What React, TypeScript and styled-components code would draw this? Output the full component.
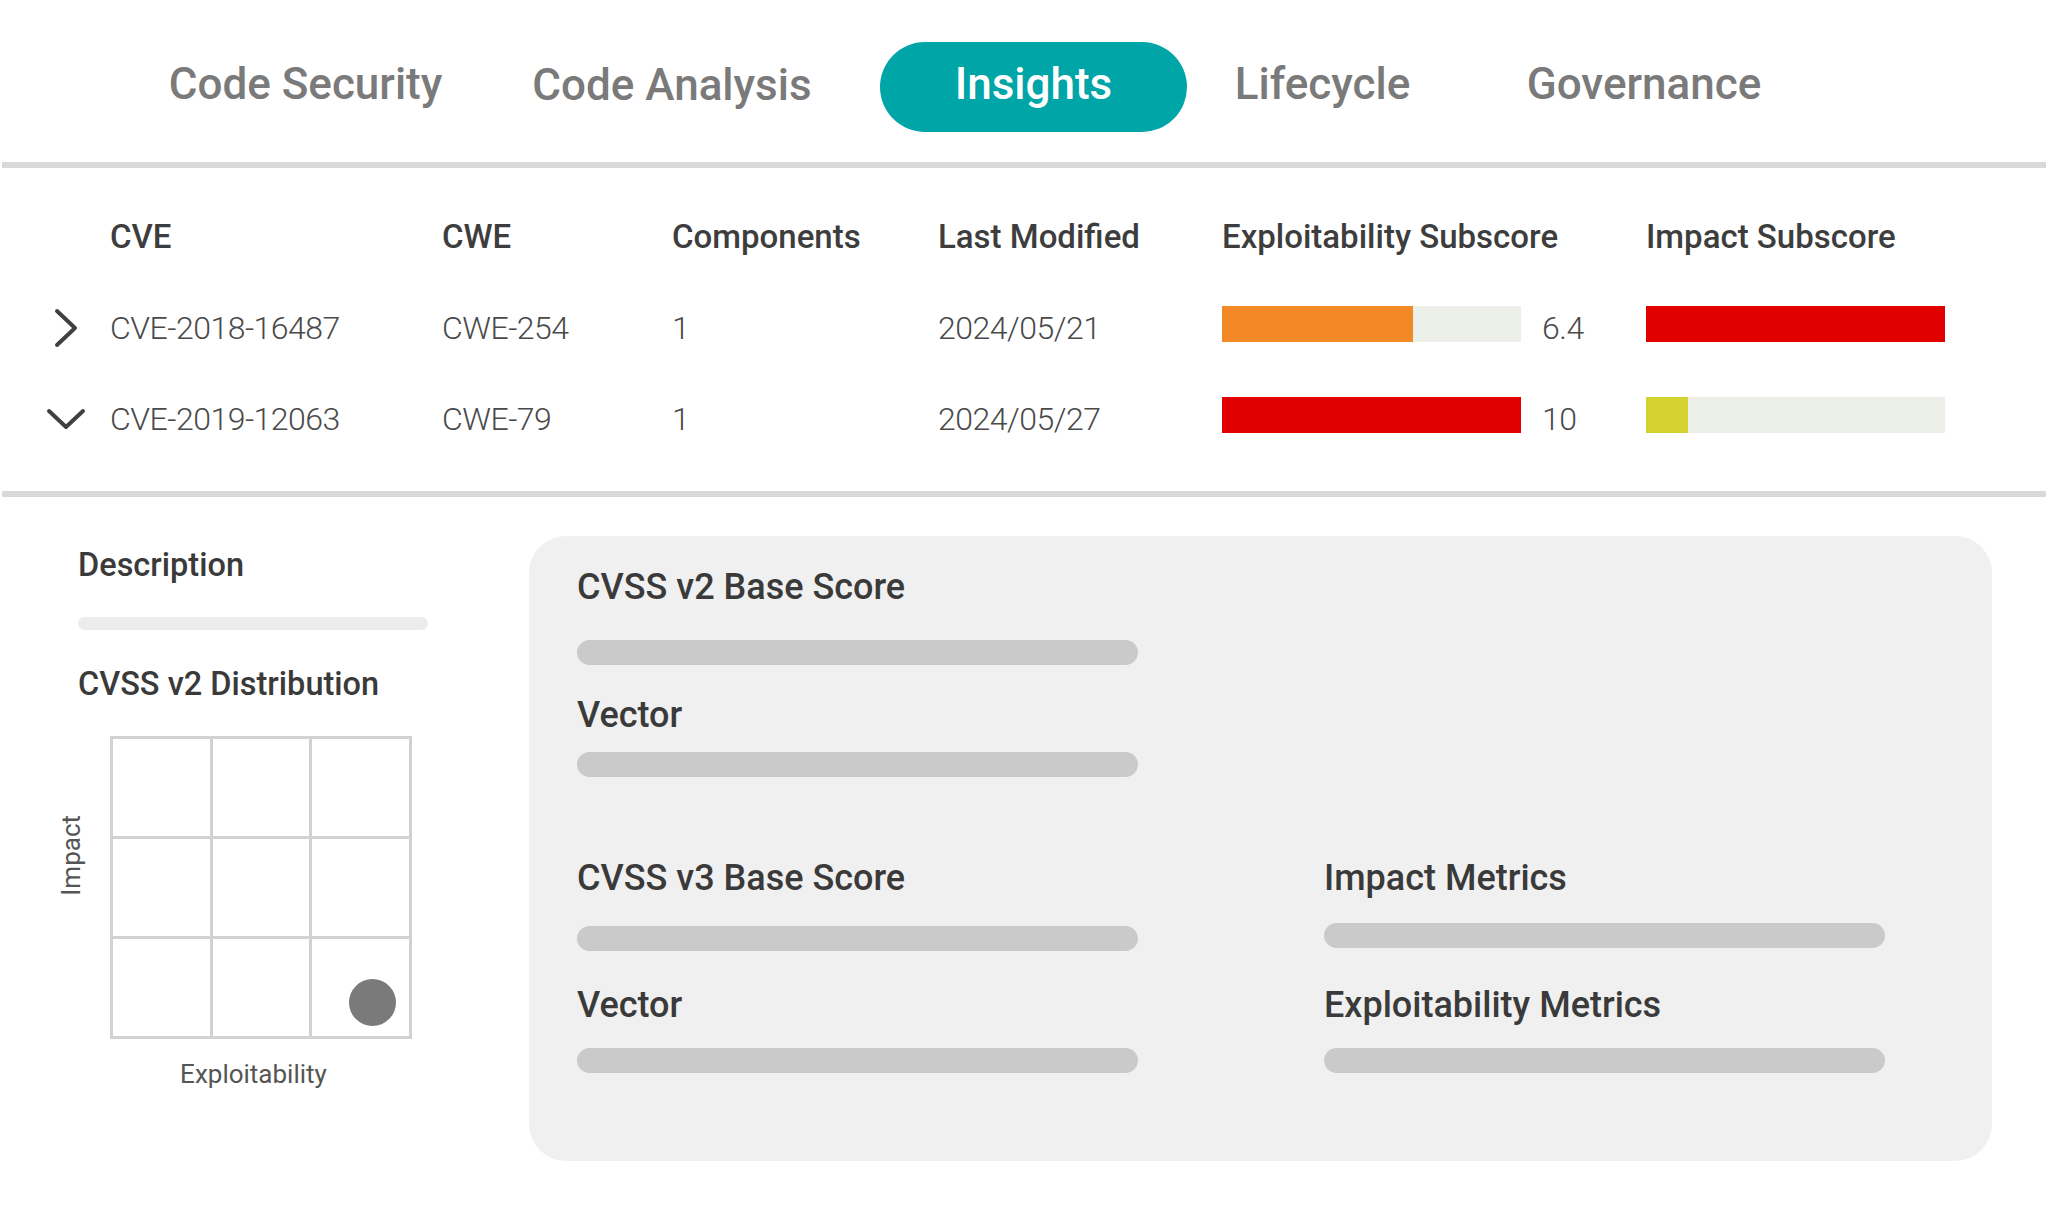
import React from 'react';
import styled, { createGlobalStyle } from 'styled-components';

const GlobalStyle = createGlobalStyle`
  html, body { margin: 0; padding: 0; background: #ffffff; }
  body {
    font-family: Roboto, "Liberation Sans", Arial, sans-serif;
    width: 2048px;
    height: 1221px;
    overflow: hidden;
  }
  * { box-sizing: border-box; }
`;

const Page = styled.div`
  width: 2048px;
  height: 1221px;
  display: flex;
  flex-direction: column;
`;

const TabBar = styled.nav`
  display: flex;
  align-items: center;
  height: 168px;
  margin: 0 2px;
  padding: 42px 0 30px 118px;
  border-bottom: 6px solid #d9d9d9;
`;

const Tab = styled.div<{ $w: number; $active?: boolean; $ml?: number; $dy?: number }>`
  width: ${(p) => p.$w}px;
  height: 90px;
  margin-left: ${(p) => p.$ml ?? 0}px;
  display: flex;
  align-items: center;
  justify-content: center;
  padding-bottom: ${(p) => 7 - (p.$dy ?? 0) * 2}px;
  font-size: 44px;
  font-weight: 500;
  line-height: 1;
  color: ${(p) => (p.$active ? '#ffffff' : '#7a7a7a')};
  background: ${(p) => (p.$active ? '#00a5a8' : 'transparent')};
  border-radius: 45px;
`;

const Table = styled.section`
  margin: 0 2px;
  padding: 23px 0 27px;
  border-bottom: 6px solid #d9d9d9;
`;

const Row = styled.div`
  display: grid;
  grid-template-columns: 108px 332px 230px 266px 284px 424px 1fr;
  align-items: center;
  height: 91px;
`;

const HeadCell = styled.div`
  font-size: 33px;
  font-weight: 500;
  line-height: 1;
  color: #3d3d3d;
`;

const Cell = styled.div`
  font-size: 32px;
  font-weight: 300;
  line-height: 1;
  letter-spacing: -0.5px;
  color: #4a4a4a;
`;

const ChevronCell = styled.div`
  display: flex;
  align-items: center;
  padding-left: 44px;
`;

const ScoreCell = styled.div`
  display: flex;
  align-items: center;
  gap: 21px;
`;

const Track = styled.div`
  width: 299px;
  height: 36px;
  margin-bottom: 7px;
  background: #eceee8;
  display: flex;
`;

const Fill = styled.div<{ $color: string }>`
  height: 100%;
  background: ${(p) => p.$color};
`;

const Lower = styled.div`
  display: flex;
  flex: 1;
`;

const LeftCol = styled.aside`
  width: 529px;
  padding: 52px 0 0 78px;
  display: flex;
  flex-direction: column;
`;

const SideTitle = styled.h3<{ $mt?: number }>`
  margin: ${(p) => p.$mt ?? 0}px 0 0;
  font-size: 32.5px;
  font-weight: 500;
  line-height: 1;
  color: #3a3a3a;
`;

const DescBar = styled.div`
  margin-top: 35px;
  width: 350px;
  height: 13px;
  border-radius: 7px;
  background: #ececec;
`;

const ChartRow = styled.div`
  display: flex;
  align-items: flex-start;
  margin: 36px 0 0 -20px;
`;

const AxisY = styled.div`
  writing-mode: vertical-rl;
  transform: rotate(180deg);
  margin: 79px 26px 0 0;
  font-size: 26px;
  line-height: 1;
  color: #555555;
`;

const Matrix = styled.div`
  width: 302px;
  height: 303px;
  padding: 3px;
  gap: 3px;
  display: grid;
  grid-template-columns: repeat(3, 1fr);
  grid-template-rows: repeat(3, 1fr);
  background: #d2d2d2;
`;

const MatrixCell = styled.div`
  background: #ffffff;
  display: flex;
  justify-content: flex-end;
  align-items: flex-end;
  padding: 0 13px 10px 0;
`;

const Dot = styled.div`
  width: 47px;
  height: 47px;
  border-radius: 50%;
  background: #7a7a7a;
`;

const AxisX = styled.div`
  margin: 22px 0 0 32px;
  width: 302px;
  padding-right: 15px;
  text-align: center;
  font-size: 26px;
  line-height: 1;
  color: #555555;
`;

const Panel = styled.section`
  width: 1463px;
  height: 625px;
  margin-top: 39px;
  padding: 33px 48px;
  border-radius: 37px;
  background: #f0f0f0;
  display: flex;
  flex-direction: column;
`;

const Field = styled.div<{ $mt?: number }>`
  display: flex;
  flex-direction: column;
  margin-top: ${(p) => p.$mt ?? 0}px;
`;

const FieldLabel = styled.div`
  font-size: 36px;
  font-weight: 500;
  line-height: 1;
  color: #3a3a3a;
`;

const FieldBar = styled.div<{ $mt: number }>`
  margin-top: ${(p) => p.$mt}px;
  width: 561px;
  height: 25px;
  border-radius: 13px;
  background: #cacaca;
`;

const FieldGrid = styled.div<{ $mt: number }>`
  display: grid;
  grid-template-columns: 561px 561px;
  column-gap: 186px;
  margin-top: ${(p) => p.$mt}px;
`;

const ChevronRight = () => (
  <svg width="40" height="40" viewBox="0 0 40 40" fill="none">
    <path d="M11 3 L29 20 L11 37" stroke="#404040" strokeWidth="4" strokeLinecap="round" strokeLinejoin="round" />
  </svg>
);

const ChevronDown = () => (
  <svg width="40" height="40" viewBox="0 0 40 40" fill="none">
    <path d="M3 12 L20 28 L37 12" stroke="#404040" strokeWidth="4" strokeLinecap="round" strokeLinejoin="round" />
  </svg>
);

type Vuln = {
  cve: string;
  cwe: string;
  components: number;
  modified: string;
  expl: number;
  explColor: string;
  impact: number;
  impactColor: string;
  open: boolean;
};

const rows: Vuln[] = [
  { cve: 'CVE-2018-16487', cwe: 'CWE-254', components: 1, modified: '2024/05/21', expl: 6.4, explColor: '#f38826', impact: 10, impactColor: '#e10000', open: false },
  { cve: 'CVE-2019-12063', cwe: 'CWE-79', components: 1, modified: '2024/05/27', expl: 10, explColor: '#e10000', impact: 1.4, impactColor: '#d4d22e', open: true },
];

const tabs = [
  { label: 'Code Security', w: 371 },
  { label: 'Code Analysis', w: 362, dy: 1.5 },
  { label: 'Insights', w: 307, ml: 27, active: true },
  { label: 'Lifecycle', w: 271 },
  { label: 'Governance', w: 372 },
];

export default function App() {
  return (
    <Page>
      <GlobalStyle />
      <TabBar>
        {tabs.map((t) => (
          <Tab key={t.label} $w={t.w} $ml={t.ml} $active={t.active} $dy={t.dy}>
            {t.label}
          </Tab>
        ))}
      </TabBar>

      <Table>
        <Row>
          <div />
          <HeadCell>CVE</HeadCell>
          <HeadCell>CWE</HeadCell>
          <HeadCell>Components</HeadCell>
          <HeadCell>Last Modified</HeadCell>
          <HeadCell>Exploitability Subscore</HeadCell>
          <HeadCell>Impact Subscore</HeadCell>
        </Row>
        {rows.map((r) => (
          <Row key={r.cve}>
            <ChevronCell>{r.open ? <ChevronDown /> : <ChevronRight />}</ChevronCell>
            <Cell>{r.cve}</Cell>
            <Cell>{r.cwe}</Cell>
            <Cell>{r.components}</Cell>
            <Cell>{r.modified}</Cell>
            <ScoreCell>
              <Track>
                <Fill $color={r.explColor} style={{ width: `${r.expl * 10}%` }} />
              </Track>
              <Cell>{r.expl}</Cell>
            </ScoreCell>
            <ScoreCell>
              <Track>
                <Fill $color={r.impactColor} style={{ width: `${r.impact * 10}%` }} />
              </Track>
            </ScoreCell>
          </Row>
        ))}
      </Table>

      <Lower>
        <LeftCol>
          <SideTitle>Description</SideTitle>
          <DescBar />
          <SideTitle $mt={38}>CVSS v2 Distribution</SideTitle>
          <ChartRow>
            <AxisY>Impact</AxisY>
            <Matrix>
              {Array.from({ length: 9 }).map((_, i) => (
                <MatrixCell key={i}>{i === 8 && <Dot />}</MatrixCell>
              ))}
            </Matrix>
          </ChartRow>
          <AxisX>Exploitability</AxisX>
        </LeftCol>

        <Panel>
          <Field>
            <FieldLabel>CVSS v2 Base Score</FieldLabel>
            <FieldBar $mt={35} />
          </Field>
          <Field $mt={32}>
            <FieldLabel>Vector</FieldLabel>
            <FieldBar $mt={19} />
          </Field>
          <FieldGrid $mt={83}>
            <Field>
              <FieldLabel>CVSS v3 Base Score</FieldLabel>
              <FieldBar $mt={30} />
            </Field>
            <Field>
              <FieldLabel>Impact Metrics</FieldLabel>
              <FieldBar $mt={27} />
            </Field>
          </FieldGrid>
          <FieldGrid $mt={36}>
            <Field>
              <FieldLabel>Vector</FieldLabel>
              <FieldBar $mt={25} />
            </Field>
            <Field>
              <FieldLabel>Exploitability Metrics</FieldLabel>
              <FieldBar $mt={25} />
            </Field>
          </FieldGrid>
        </Panel>
      </Lower>
    </Page>
  );
}
